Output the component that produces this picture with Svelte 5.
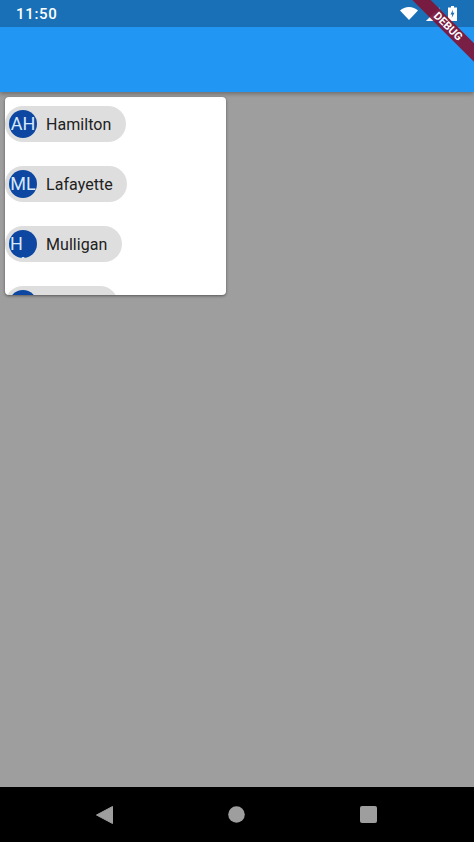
<script>
  const people = [
    { initials: "AH", name: "Hamilton" },
    { initials: "ML", name: "Lafayette" },
    { initials: "H M", name: "Mulligan", wrapped: true },
    { initials: "JL", name: "Laurens" }
  ];
</script>

<div class="screen">
  <div class="status">
    <span class="time">11:50</span>
    <div class="status-icons">
      <svg width="18" height="13" viewBox="0 0 18 13"><path d="M0 3.500C2.500 1.300 5.600 0 9 0s6.500 1.300 9 3.500L9 13z" fill="#fff" /></svg>
      <svg width="14" height="14" viewBox="0 0 14 14"><path d="M0 14L14 0v14z" fill="#fff" fill-opacity="0.3" /><path d="M0 14L9 5v9z" fill="#fff" /></svg>
      <svg width="9" height="15" viewBox="0 0 9 15"><path d="M3 0h3v1.500h3V15H0V1.500h3z" fill="#fff" /><path d="M5 3.500L2.500 8.500h1.700L3.700 12 6.500 6.800H4.700z" fill="#1970b6" /></svg>
    </div>
  </div>
  <div class="appbar"></div>

  <main class="body">
    <div class="card">
      {#each people as p}
        <div class="chip">
          <div class="avatar" class:wrapped={p.wrapped}>{p.initials}</div>
          <span class="label">{p.name}</span>
        </div>
      {/each}
    </div>
  </main>

  <div class="navbar">
    <svg width="17" height="18" viewBox="0 0 17 18"><path d="M16.500 0.500v17L0.500 9z" fill="#9e9e9e" stroke="#9e9e9e" stroke-linejoin="round" /></svg>
    <svg width="17" height="17" viewBox="0 0 17 17"><circle cx="8.500" cy="8.500" r="8.300" fill="#9e9e9e" /></svg>
    <svg width="17" height="17" viewBox="0 0 17 17"><rect width="17" height="17" rx="2" fill="#9e9e9e" /></svg>
  </div>

  <div class="banner">DEBUG</div>
</div>

<style>
  :global(body) {
    margin: 0;
    font-family: Roboto, "Liberation Sans", sans-serif;
  }

  .screen {
    width: 474px;
    height: 842px;
    position: relative;
    overflow: hidden;
    display: flex;
    flex-direction: column;
    background: #9e9e9e;
  }

  .status {
    height: 27px;
    background: #1970b6;
    display: flex;
    align-items: center;
    justify-content: space-between;
    padding: 0 17px 0 16px;
    color: #fff;
    flex: none;
    position: relative;
    z-index: 1;
  }

  .time {
    font-size: 15px;
    font-weight: 500;
    letter-spacing: 0.7px;
  }

  .status-icons {
    display: flex;
    align-items: center;
    gap: 8px;
  }

  .appbar {
    height: 65px;
    background: #2196f3;
    box-shadow: 0 2px 4px rgba(0, 0, 0, 0.3);
    flex: none;
    position: relative;
  }

  .body {
    flex: 1;
    padding: 5px 0 0 4.500px;
  }

  .card {
    width: 221px;
    height: 198px;
    background: #fff;
    border-radius: 4px;
    box-shadow: 0 1px 3px rgba(0, 0, 0, 0.45);
    overflow: hidden;
    display: flex;
    flex-direction: column;
    gap: 24px;
    padding-top: 9px;
    box-sizing: border-box;
  }

  .chip {
    flex: none;
    align-self: flex-start;
    height: 36px;
    margin-left: 0.500px;
    border-radius: 18px;
    background: #dedede;
    display: flex;
    align-items: center;
    padding: 0 14.500px 0 4px;
    gap: 9px;
  }

  .avatar {
    width: 28px;
    height: 28px;
    box-sizing: border-box;
    padding-top: 4px;
    border-radius: 50%;
    background: #0d47a1;
    color: #d6e8fb;
    font-size: 18px;
    line-height: 20px;
    overflow: hidden;
    flex: none;
    text-align: center;
  }

  .avatar.wrapped {
    text-align: left;
    padding-left: 1px;
  }

  .label {
    font-size: 16px;
    letter-spacing: 0.05px;
    color: #212121;
    white-space: nowrap;
  }

  .navbar {
    height: 55px;
    background: #000;
    flex: none;
    display: flex;
    align-items: center;
    justify-content: space-between;
    padding: 0 97px 0 96px;
  }

  .banner {
    position: absolute;
    top: 19.750px;
    right: -33.750px;
    width: 120px;
    height: 13px;
    line-height: 13px;
    text-align: center;
    transform: rotate(45deg);
    background: rgba(128, 20, 55, 0.93);
    color: #fff;
    font-size: 11px;
    font-weight: 700;
    z-index: 2;
  }
</style>
